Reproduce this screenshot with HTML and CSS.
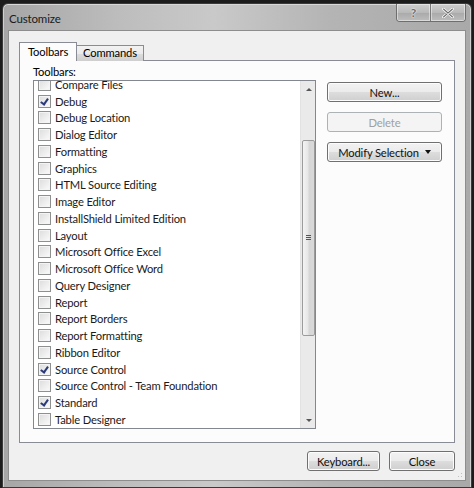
FILE: index.html
```html
<!DOCTYPE html>
<html>
<head>
<meta charset="utf-8">
<title>Customize</title>
<link rel="stylesheet" href="styles.css">
</head>
<body>
<div class="window">
  <div class="titlebar">
    <span class="title">Customize</span>
    <div class="caption-btns">
      <span class="cbtn help">?</span>
      <span class="cbtn close">
        <svg width="12" height="10" viewBox="0 0 12 10"><path d="M1.5 1 L10.5 9 M10.5 1 L1.5 9" stroke="#fff" stroke-width="2.6" stroke-linecap="round"/><path d="M1.5 1 L10.5 9 M10.5 1 L1.5 9" stroke="#6d6d6d" stroke-width="1.1" stroke-linecap="round"/></svg>
      </span>
    </div>
  </div>
  <div class="client">
    <div class="tabs">
      <span class="tab active">Toolbars</span>
      <span class="tab">Commands</span>
    </div>
    <div class="panel">
      <div class="label">Toolbars:</div>
      <div class="panel-body">
        <div class="listbox">
          <div class="items">
            <div class="item"><span class="cb"></span>Compare Files</div>
            <div class="item"><span class="cb checked"></span>Debug</div>
            <div class="item"><span class="cb"></span>Debug Location</div>
            <div class="item"><span class="cb"></span>Dialog Editor</div>
            <div class="item"><span class="cb"></span>Formatting</div>
            <div class="item"><span class="cb"></span>Graphics</div>
            <div class="item"><span class="cb"></span>HTML Source Editing</div>
            <div class="item"><span class="cb"></span>Image Editor</div>
            <div class="item"><span class="cb"></span>InstallShield Limited Edition</div>
            <div class="item"><span class="cb"></span>Layout</div>
            <div class="item"><span class="cb"></span>Microsoft Office Excel</div>
            <div class="item"><span class="cb"></span>Microsoft Office Word</div>
            <div class="item"><span class="cb"></span>Query Designer</div>
            <div class="item"><span class="cb"></span>Report</div>
            <div class="item"><span class="cb"></span>Report Borders</div>
            <div class="item"><span class="cb"></span>Report Formatting</div>
            <div class="item"><span class="cb"></span>Ribbon Editor</div>
            <div class="item"><span class="cb checked"></span>Source Control</div>
            <div class="item"><span class="cb"></span>Source Control - Team Foundation</div>
            <div class="item"><span class="cb checked"></span>Standard</div>
            <div class="item"><span class="cb"></span>Table Designer</div>
          </div>
          <div class="scrollbar">
            <div class="arrow up"></div>
            <div class="track-top"></div>
            <div class="thumb"><span class="grip"></span></div>
            <div class="track-bottom"></div>
            <div class="arrow down"></div>
          </div>
        </div>
        <div class="side-btns">
          <button class="btn">New...</button>
          <button class="btn disabled">Delete</button>
          <button class="btn">Modify Selection <span class="caret"></span></button>
        </div>
      </div>
    </div>
    <div class="footer">
      <button class="btn kb">Keyboard...</button>
      <button class="btn cl">Close</button>
    </div>
    <div class="grip-corner"></div>
  </div>
</div>
</body>
</html>
```
FILE: styles.css
```css
* { box-sizing: border-box; }
html, body { margin: 0; padding: 0; }
body {
  width: 474px;
  height: 488px;
  background: #1c1c1c;
  font-family: Lato, "Open Sans", sans-serif;
  font-size: 11.2px;
  letter-spacing: -0.15px;
  color: #000;
  overflow: hidden;
}
.window {
  margin: 3px 2px 0 2px;
  height: 485px;
  border: 1px solid #3a3a3a;
  border-radius: 6px 6px 0 0;
  background: linear-gradient(to right, #a6a6a6 0%, #bdbdbd 25%, #c9c9c9 45%, #b4b4b4 70%, #a9a9a9 100%);
  padding: 0 5px 6px 5px;
  display: flex;
  flex-direction: column;
  box-shadow: inset 0 1px 0 #d8d8d8, inset 1px 0 0 #cfcfcf, inset -1px 0 0 #cfcfcf;
}
.titlebar {
  height: 26px;
  display: flex;
  align-items: flex-start;
  justify-content: space-between;
}
.title {
  margin-top: 8px;
  padding-left: 1px;
  color: #1a1a1a;
  font-size: 11.5px;
}
.caption-btns {
  display: flex;
  height: 18px;
  border: 1px solid #6e6e6e;
  border-top: none;
  border-radius: 0 0 4px 4px;
  overflow: hidden;
}
.cbtn {
  width: 34px;
  height: 17px;
  display: flex;
  align-items: center;
  justify-content: center;
  background: linear-gradient(#cfcfcf, #b9b9b9 50%, #a9a9a9 51%, #bdbdbd);
  box-shadow: inset 0 0 0 1px rgba(255,255,255,0.45);
}
.cbtn.help {
  border-right: 1px solid #7a7a7a;
  font-weight: bold;
  color: #6a6a6a;
  font-size: 12px;
  text-shadow: 0 0 2px #fff, 0 0 1px #fff;
}
.client {
  flex: 1;
  background: #f0f0f0;
  border: 1px solid #8d8d8d;
  padding: 11px 10px 7px 10px;
  display: flex;
  flex-direction: column;
  position: relative;
}
.tabs {
  display: flex;
  align-items: flex-end;
  height: 19px;
  position: relative;
  z-index: 1;
  margin-bottom: -1px;
}
.tab {
  height: 16px;
  padding: 0 6px;
  border: 1px solid #898c95;
  border-bottom: none;
  background: linear-gradient(#f2f2f2, #ebebeb 50%, #dddddd 51%, #cfcfcf);
  line-height: 14px;
  margin-left: -1px;
}
.tab.active {
  height: 19px;
  background: #fcfcfc;
  margin-left: 0;
  padding: 0 8px;
  line-height: 18px;
  z-index: 2;
  position: relative;
}
.panel {
  height: 383px;
  border: 1px solid #898c95;
  background: #fcfcfc;
  padding: 3px 12px 13px 13px;
  display: flex;
  flex-direction: column;
}
.label {
  height: 16px;
  line-height: 15px;
}
.panel-body {
  display: flex;
  gap: 11px;
  align-items: flex-start;
}
.listbox {
  width: 283px;
  height: 349px;
  border: 1px solid #828790;
  background: #fff;
  display: flex;
  overflow: hidden;
}
.items {
  flex: 1;
  overflow: hidden;
  padding-left: 4px;
}
.items .item:first-child { margin-top: -5px; }
.item {
  height: 16.75px;
  display: flex;
  align-items: center;
  white-space: nowrap;
  color: #1a1a1a;
}
.cb {
  width: 13px;
  height: 13px;
  border: 1px solid #8e8f8f;
  background: linear-gradient(135deg, #dcdcdc, #fbfbfb);
  box-shadow: inset 0 0 0 1px #f4f4f4;
  margin-right: 4px;
  position: relative;
  flex: none;
}
.cb.checked::after {
  content: "";
  position: absolute;
  left: 3px;
  top: 1px;
  width: 3px;
  height: 6px;
  border-right: 2px solid #2b3a7a;
  border-bottom: 2px solid #2b3a7a;
  transform: rotate(35deg);
}
.scrollbar {
  width: 15px;
  background: #eaeaea;
  border-left: 1px solid #e2e2e2;
  display: flex;
  flex-direction: column;
  align-items: center;
}
.arrow {
  height: 17px;
  width: 100%;
  position: relative;
}
.arrow::after {
  content: "";
  position: absolute;
  left: 5px;
  border-left: 3px solid transparent;
  border-right: 3px solid transparent;
}
.arrow.up::after { top: 7px; border-bottom: 3px solid #555; }
.arrow.down::after { top: 8px; border-top: 3px solid #555; }
.track-top { height: 42px; }
.thumb {
  width: 13px;
  height: 196px;
  border: 1px solid #9b9b9b;
  border-radius: 2px;
  background: linear-gradient(to right, #f3f3f3, #e6e6e6 45%, #d6d6d6 55%, #d9d9d9);
  display: flex;
  align-items: center;
  justify-content: center;
}
.grip {
  width: 5px;
  height: 6px;
  background: repeating-linear-gradient(#555 0 1px, transparent 1px 2px);
}
.track-bottom { flex: 1; }
.side-btns {
  display: flex;
  flex-direction: column;
  gap: 10px;
  margin-top: 2px;
}
.btn {
  font-family: inherit;
  font-size: 11.2px;
  letter-spacing: -0.15px;
  color: #111;
  height: 20px;
  width: 115px;
  padding: 0;
  border: 1px solid #707070;
  border-radius: 3px;
  background: linear-gradient(#f2f2f2, #ebebeb 50%, #dddddd 51%, #cfcfcf);
  box-shadow: inset 0 0 0 1px #fcfcfc;
  display: flex;
  align-items: center;
  justify-content: center;
}
.btn.disabled {
  border-color: #adb2b5;
  background: #f4f4f4;
  color: #a0a0a0;
  box-shadow: none;
}
.caret {
  display: inline-block;
  margin-left: 6px;
  border-left: 3.5px solid transparent;
  border-right: 3.5px solid transparent;
  border-top: 4px solid #111;
}
.footer {
  display: flex;
  justify-content: flex-end;
  gap: 9px;
  margin-top: 8px;
}
.btn.kb { width: 73px; }
.btn.cl { width: 66px; }
.grip-corner {
  position: absolute;
  right: 1px;
  bottom: 1px;
  width: 10px;
  height: 10px;
  background:
    radial-gradient(circle, #c0c0c0 0.8px, transparent 1px) 0 0 / 3px 3px;
  clip-path: polygon(100% 0, 100% 100%, 0 100%);
}
```
